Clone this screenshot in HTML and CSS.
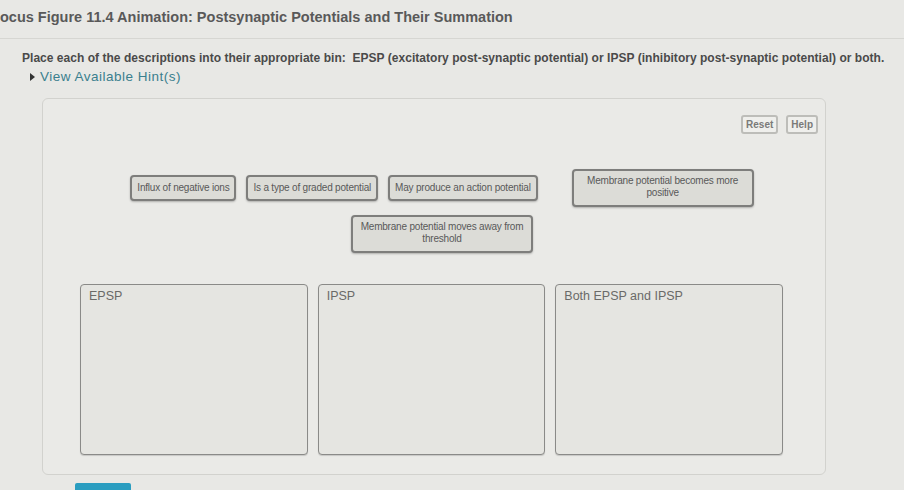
FILE: index.html
```html
<!DOCTYPE html>
<html lang="en">

<head>
    <meta charset="UTF-8">
    <meta name="viewport" content="width=device-width, initial-scale=1.0">
    <title>Postsynaptic Potentials</title>
    <link rel="stylesheet" href="styles.css">
</head>

<body>
    <div class="title-bar">
        <h1>ocus Figure 11.4 Animation: Postsynaptic Potentials and Their Summation</h1>
    </div>

    <div class="question">
        <p class="prompt">Place each of the descriptions into their appropriate bin:&nbsp; EPSP (excitatory post-synaptic potential) or IPSP (inhibitory post-synaptic potential) or both.</p>
        <a class="hint" href="#"><span class="arrow"></span>View Available Hint(s)</a>
    </div>

    <div class="activity">
        <div class="toolbar">
            <button class="tool">Reset</button>
            <button class="tool">Help</button>
        </div>

        <!-- draggable labels -->
        <div class="labels">
            <div class="label">Influx of negative ions</div>
            <div class="label">Is a type of graded potential</div>
            <div class="label">May produce an action potential</div>
            <div class="label wide">Membrane potential becomes more positive</div>
        </div>
        <div class="labels">
            <div class="label wide">Membrane potential moves away from threshold</div>
        </div>

        <!-- drop targets -->
        <div class="bins">
            <div class="bin">EPSP</div>
            <div class="bin">IPSP</div>
            <div class="bin">Both EPSP and IPSP</div>
        </div>
    </div>

    <button class="submit">Submit</button>
</body>

</html>
```

FILE: styles.css
```css
body {
    margin: 0;
    background: #e8e8e5;
    font-family: "Liberation Sans", Arial, sans-serif;
    color: #555;
    overflow: hidden;
}

.title-bar {
    height: 38px;
    border-bottom: 1px solid #d6d6d2;
    display: flex;
    align-items: center;
}

.title-bar h1 {
    margin: 0;
    padding-bottom: 4px;
    font-size: 14.5px;
    font-weight: bold;
    color: #595959;
}

.question {
    padding: 12px 0 0 22px;
}

.prompt {
    margin: 0;
    font-size: 12px;
    font-weight: bold;
    letter-spacing: 0.03px;
    color: #4a4a4a;
}

.hint {
    display: inline-flex;
    align-items: center;
    margin: 4px 0 0 8px;
    font-size: 13.5px;
    letter-spacing: 0.5px;
    color: #3a7f8e;
    text-decoration: none;
}

.hint .arrow {
    width: 0;
    height: 0;
    border-top: 4px solid transparent;
    border-bottom: 4px solid transparent;
    border-left: 5px solid #333;
    margin-right: 5px;
}

.activity {
    margin: 13px 0 0 42px;
    width: 784px;
    height: 377px;
    border: 1px solid #d2d2ce;
    border-radius: 6px;
    background: #eaeae7;
    box-sizing: border-box;
}

.toolbar {
    display: flex;
    justify-content: flex-end;
    gap: 8px;
    padding: 16px 7px 0 0;
}

.tool {
    height: 19px;
    padding: 0 3px;
    border: 2px solid #bdbdb9;
    border-radius: 3px;
    background: #efefec;
    font-family: "Liberation Sans", Arial, sans-serif;
    font-size: 10px;
    font-weight: bold;
    color: #7a7a78;
}

.labels {
    display: flex;
    justify-content: center;
    align-items: center;
    gap: 10px;
    padding-left: 16px;
}

.labels:nth-of-type(2) {
    margin-top: 35px;
}

.labels:nth-of-type(3) {
    margin-top: 8px;
}

.label {
    padding: 5px 5px;
    border: 2px solid #7e7e7c;
    border-radius: 4px;
    background: #dcdcd7;
    box-shadow: 0 1px 2px rgba(0, 0, 0, 0.25);
    font-size: 10px;
    line-height: 12px;
    letter-spacing: -0.2px;
    color: #595959;
    text-align: center;
}

.label.wide {
    width: 168px;
    padding: 4px 5px 6px;
}

.labels .label.wide:nth-child(4) {
    margin-left: 24px;
}

.bins {
    display: grid;
    grid-template-columns: repeat(3, 1fr);
    gap: 10px;
    margin: 31px 42px 0 37px;
}

.bin {
    height: 171px;
    box-sizing: border-box;
    padding: 4px 8px;
    border: 1px solid #8a8a88;
    border-radius: 4px;
    background: #e5e5e1;
    box-shadow: 0 1px 1px rgba(0, 0, 0, 0.15);
    font-size: 12.5px;
    color: #6a6a68;
}

.submit {
    margin: 8px 0 0 75px;
    height: 22px;
    width: 56px;
    border: none;
    border-radius: 2px;
    background: #2a9dc0;
    color: #fff;
    font-family: "Liberation Sans", Arial, sans-serif;
    font-size: 11px;
    font-weight: bold;
}
```
